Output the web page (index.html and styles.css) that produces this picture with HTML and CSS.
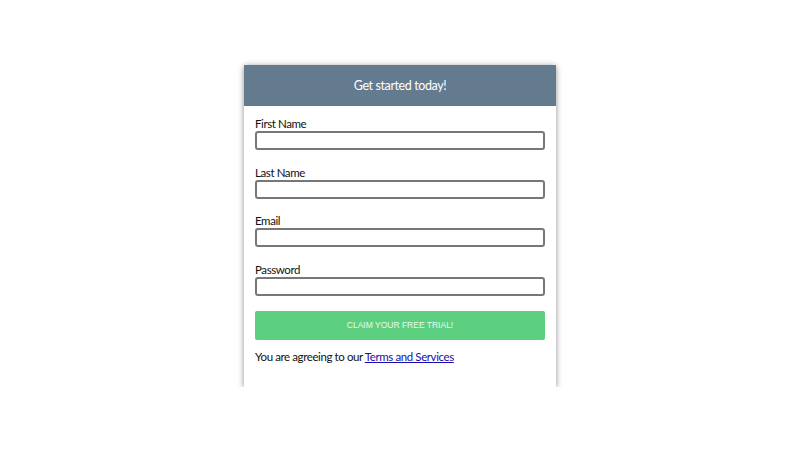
FILE: index.html
```html
<!DOCTYPE html>
<html lang="en">

<head>
  <meta charset="UTF-8">
  <meta name="viewport" content="width=device-width, initial-scale=1.0">
  <title>Get started today!</title>
  <link rel="stylesheet" href="styles.css">
</head>

<body>
  <div class="card">
    <div class="card-header">Get started today!</div>
    <form class="card-body">
      <div class="field">
        <label for="firstName">First Name</label>
        <input type="text" id="firstName">
      </div>
      <div class="field">
        <label for="lastName">Last Name</label>
        <input type="text" id="lastName">
      </div>
      <div class="field">
        <label for="email">Email</label>
        <input type="email" id="email">
      </div>
      <div class="field">
        <label for="password">Password</label>
        <input type="password" id="password">
      </div>
      <button type="button" class="trial-btn">Claim your free trial!</button>
      <p class="terms">You are agreeing to our <a href="#">Terms and Services</a></p>
    </form>
  </div>
</body>

</html>
```

FILE: styles.css
```css
body {
  font-family: 'Lato', 'Open Sans', sans-serif;
  background-color: #fff;
  color: #111;
  margin: 0;
  padding: 0;
}

.card {
  width: 312px;
  margin: 65px auto 0;
  background-color: #fff;
  box-shadow: 0 1px 6px rgba(0, 0, 0, 0.45);
}

.card-header {
  height: 41px;
  line-height: 41px;
  text-align: center;
  background-color: #647a8f;
  color: #fff;
  font-size: 12.5px;
  letter-spacing: -0.4px;
}

.card-body {
  display: flex;
  flex-direction: column;
  padding: 10px 11px 22px;
  margin: 0;
}

.field {
  display: flex;
  flex-direction: column;
  margin-bottom: 14.5px;
}

label {
  font-size: 11.5px;
  line-height: 15px;
  letter-spacing: -0.4px;
}

input {
  box-sizing: border-box;
  height: 19px;
  margin: 0;
  border: 2px solid #777;
  border-radius: 3px;
  font-size: 12px;
}

.trial-btn {
  margin-top: 0.5px;
  height: 29px;
  border: none;
  border-radius: 2px;
  background-color: #5ccf80;
  color: #eafaf0;
  font-family: 'Liberation Sans', Arial, sans-serif;
  font-size: 8.5px;
  text-transform: uppercase;
}

.terms {
  margin: 9px 0 0;
  font-size: 11.5px;
  line-height: 16px;
  letter-spacing: -0.4px;
}

.terms a {
  color: #1a0dab;
}
```
